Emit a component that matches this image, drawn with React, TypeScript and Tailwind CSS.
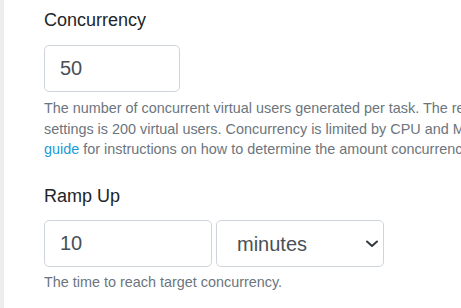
import { useState } from "react";

export default function App() {
  const [concurrency, setConcurrency] = useState("50");
  const [rampUp, setRampUp] = useState("10");
  const [unit, setUnit] = useState("minutes");

  return (
    <div
      className="flex w-[461px] h-[308px] overflow-hidden bg-white"
      style={{ fontFamily: '"Liberation Sans", Arial, sans-serif' }}
    >
      <div className="w-[4px] shrink-0 bg-[#ededed]" />
      <div className="pl-[40px] pt-[7px] shrink-0">
        {/* Concurrency */}
        <div>
          <label className="block text-[18px] leading-[27px] text-[#212529] mb-[11px]">
            Concurrency
          </label>
          <input
            value={concurrency}
            onChange={(e) => setConcurrency(e.target.value)}
            className="block w-[136px] h-[47px] px-[15px] text-[20px] text-[#495057] border border-[#ced4da] rounded-[5px] outline-none"
          />
          <p className="mt-[6px] text-[14.4px] leading-[20.5px] text-[#6c757d] whitespace-nowrap">
            The number of concurrent virtual users generated per task. The recommended maximum for default
            <br />
            settings is 200 virtual users. Concurrency is limited by CPU and Memory. See the load testing
            <br />
            <a className="text-[#1a9bd6]">guide</a> for instructions on how to determine the amount concurrency
          </p>
        </div>

        {/* Ramp Up */}
        <div className="mt-[23px]">
          <label className="block text-[18px] leading-[27px] text-[#212529] mb-[10.5px]">
            Ramp Up
          </label>
          <div className="flex gap-[4px]">
            <input
              value={rampUp}
              onChange={(e) => setRampUp(e.target.value)}
              className="block w-[168px] h-[47px] px-[15px] text-[20px] text-[#495057] border border-[#ced4da] rounded-[5px] outline-none"
            />
            <div className="relative w-[168px] h-[47px]">
              <select
                value={unit}
                onChange={(e) => setUnit(e.target.value)}
                className="appearance-none w-full h-full pl-[20px] pr-8 text-[20px] text-[#495057] bg-white border border-[#ced4da] rounded-[5px] outline-none"
              >
                <option value="seconds">seconds</option>
                <option value="minutes">minutes</option>
                <option value="hours">hours</option>
              </select>
              <svg
                className="pointer-events-none absolute right-[6px] top-[20px]"
                width="12"
                height="8"
                viewBox="0 0 12 8"
                fill="none"
              >
                <path d="M1 1.5l5 4.5 5-4.5" stroke="#343a40" strokeWidth="2" strokeLinecap="round" strokeLinejoin="round" />
              </svg>
            </div>
          </div>
          <p className="mt-[5px] text-[14.4px] leading-[20.5px] text-[#6c757d] whitespace-nowrap">
            The time to reach target concurrency.
          </p>
        </div>
      </div>
    </div>
  );
}
